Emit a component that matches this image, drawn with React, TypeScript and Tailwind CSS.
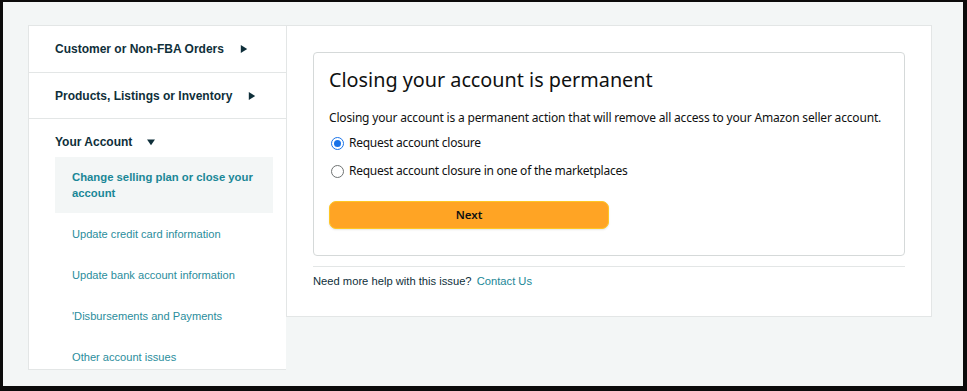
import React from "react";

const Caret = ({ down }: { down?: boolean }) => (
  <svg width="8" height="8" viewBox="0 0 10 10" className={down ? "ml-[15px]" : "ml-[16px]"}>
    {down ? <path d="M0 2 L10 2 L5 9 Z" fill="#0f2f3a" /> : <path d="M1 0 L9 5 L1 10 Z" fill="#0f2f3a" />}
  </svg>
);

const Radio = ({ checked, label }: { checked?: boolean; label: string }) => (
  <div className="flex items-center h-[28px] text-[12px] tracking-[-0.25px] text-[#0f1111]">
    <span
      className={
        checked
          ? "w-[13px] h-[13px] rounded-full border-[1.5px] border-[#1a73e8] flex items-center justify-center ml-[2px] mr-[5px]"
          : "w-[13px] h-[13px] rounded-full border border-[#6f7373] ml-[2px] mr-[5px]"
      }
    >
      {checked && <span className="w-[7px] h-[7px] rounded-full bg-[#1a73e8]" />}
    </span>
    {label}
  </div>
);

export default function App() {
  const links = [
    "Update credit card information",
    "Update bank account information",
    "'Disbursements and Payments",
    "Other account issues",
  ];
  return (
    <div className="w-[967px] h-[391px] bg-[#0b0b0b] pt-[2px] pl-[3px] pr-[4px] pb-[5px]">
      <div className="w-full h-full bg-[#f3f6f6] pt-[23px] pl-[25px] flex items-start" style={{ fontFamily: "'Liberation Sans', Arial, sans-serif" }}>
        {/* sidebar */}
        <div className="w-[258px] h-[345px] bg-white border border-[#e3e6e6] border-r-0 overflow-hidden">
          <div className="h-[47px] flex items-center pl-[26px] border-b border-[#e3e6e6] text-[12px] font-bold text-[#0f2f3a]">
            Customer or Non-FBA Orders <Caret />
          </div>
          <div className="h-[46px] flex items-center pl-[26px] border-b border-[#e3e6e6] text-[12px] font-bold text-[#0f2f3a]">
            Products, Listings or Inventory <Caret />
          </div>
          <div className="h-[38px] flex items-center pl-[26px] pt-[8px] text-[12px] font-bold text-[#0f2f3a]">
            Your Account <Caret down />
          </div>
          <div className="ml-[26px] mr-[13px]">
            <div className="bg-[#f3f6f6] pl-[17px] pr-[8px] py-[12px] text-[11.3px] leading-[16px] font-bold text-[#1a8797]">
              Change selling plan or close your account
            </div>
            {links.map((l) => (
              <div key={l} className="h-[41px] flex items-center pl-[17px] pt-[2px] text-[11.1px] text-[#2a8d9c]">
                {l}
              </div>
            ))}
          </div>
        </div>
        {/* main */}
        <div className="w-[646px] h-[292px] bg-white border border-[#e3e6e6] px-[26px] pt-[26px]">
          <div className="border border-[#d5d9d9] rounded-[4px] h-[204px] pl-[15px] pt-[13px]" style={{ fontFamily: "'Noto Sans', sans-serif" }}>
            <div className="text-[19.8px] leading-[28px] text-[#0f1111]">Closing your account is permanent</div>
            <div className="mt-[15px] text-[12px] leading-[18px] tracking-[-0.18px] text-[#0f1111]">
              Closing your account is a permanent action that will remove all access to your Amazon seller account.
            </div>
            <div className="mt-[2px]">
              <Radio checked label="Request account closure" />
              <Radio label="Request account closure in one of the marketplaces" />
            </div>
            <div className="mt-[16px] w-[280px] h-[28px] rounded-[7px] bg-[#ffa424] border border-[#ffc623] shadow-[0_1px_2px_rgba(0,0,0,0.1)] flex items-center justify-center text-[11.5px] font-semibold text-[#0f1111]">
              Next
            </div>
          </div>
          <div className="mt-[10px] border-t border-[#e3e6e6] pt-[6px] leading-[16px] text-[11.2px] text-[#0f2f3a]">
            Need more help with this issue? <span className="text-[#1a8797] ml-[2px]">Contact Us</span>
          </div>
        </div>
      </div>
    </div>
  );
}
